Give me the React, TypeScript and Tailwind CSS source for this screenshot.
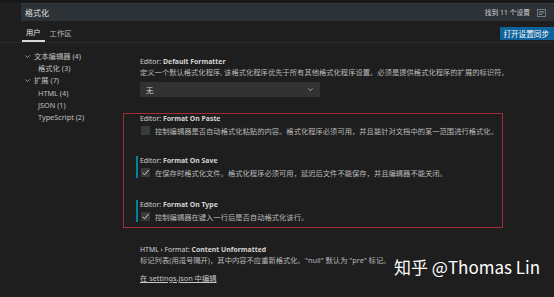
import React from "react";

function Chevron() {
  return (
    <svg width="7" height="7" viewBox="0 0 16 16" className="shrink-0">
      <path d="M3 5.5 L8 10.5 L13 5.5" fill="none" stroke="#c5c5c5" strokeWidth="1.6" />
    </svg>
  );
}

function Check() {
  return (
    <svg width="9" height="9" viewBox="0 0 16 16">
      <path d="M3 8.5 L6.5 12 L13.5 3.5" fill="none" stroke="#e0e0e0" strokeWidth="1.6" />
    </svg>
  );
}

function TreeItem({ label, level, chevron }: { label: string; level: number; chevron?: boolean }) {
  return (
    <div className={`flex items-center h-[12.2px] ${level === 0 ? "pl-[24px] gap-[3px]" : "pl-[38px]"}`}>
      {chevron && <Chevron />}
      <span>{label}</span>
    </div>
  );
}

function BoolSetting({
  name,
  desc,
  checked,
  modified,
  className,
}: {
  name: string;
  desc: string;
  checked: boolean;
  modified: boolean;
  className?: string;
}) {
  return (
    <div
      className={`ml-[12px] pl-[2px] border-l-2 ${modified ? "border-[#0c7d9d]" : "border-transparent"} ${className ?? ""}`}
    >
      <div className="leading-[10px] text-[6.9px] text-[#d4d4d4]">
        Editor: <span className="font-bold">{name}</span>
      </div>
      <div className="mt-[1px] h-[11px] flex items-center gap-[5px]">
        <div className="w-[9px] h-[9px] ml-[1px] bg-[#3a3a3a] flex items-center justify-center shrink-0">
          {checked && <Check />}
        </div>
        <span className="text-[#b9b9b9] whitespace-nowrap">{desc}</span>
      </div>
    </div>
  );
}

export default function App() {
  return (
    <div className="w-[554px] h-[297px] bg-[#1e1e1e] overflow-hidden relative text-[#cccccc] text-[7.3px] leading-[10px] font-['Noto_Sans','Noto_Sans_CJK_SC',sans-serif]">
      <div className="h-[3px] bg-[#181818]" />
      <div className="flex pl-[21px]">
        <div className="flex-1 h-[18px] bg-[#2d3237] border-t border-[#353b41] flex items-center pl-[4px] pr-[8px]">
          <span className="text-[8px] text-[#e0e0e0]">格式化</span>
          <div className="ml-auto flex items-center gap-[7px]">
            <span className="text-[6.8px] text-[#d0d0d0]">找到 11 个设置</span>
            <svg width="9" height="8" viewBox="0 0 9 8">
              <rect x="0.5" y="0.5" width="8" height="7" fill="none" stroke="#8a8a8a" strokeWidth="0.8" />
              <path d="M2 2.5 H7 M2 4 H7 M2 5.5 H5" stroke="#8a8a8a" strokeWidth="0.8" />
            </svg>
          </div>
        </div>
      </div>
      <div className="h-[22px] flex border-b border-[#2a2a2a]">
        <div className="flex pl-[22px] gap-[4px]">
          <div className="px-[4px] pt-[3px] flex items-center border-b-2 border-[#d8d8d8] text-[#e8e8e8]">用户</div>
          <div className="px-[1px] pt-[3px] flex items-center text-[#b8b8b8]">工作区</div>
        </div>
        <div className="ml-auto mt-[6px] h-[13px] bg-[#0e639c] text-white text-[7.6px] flex items-center pl-[3px] pr-[5px] whitespace-nowrap">
          打开设置同步
        </div>
      </div>
      <div className="flex">
        <div className="w-[123px] shrink-0 pt-[7px] text-[#c0c0c0] leading-[12px]">
          <TreeItem label="文本编辑器 (4)" level={0} chevron />
          <TreeItem label="格式化 (3)" level={1} />
          <TreeItem label="扩展 (7)" level={0} chevron />
          <TreeItem label="HTML (4)" level={1} />
          <TreeItem label="JSON (1)" level={1} />
          <TreeItem label="TypeScript (2)" level={1} />
        </div>
        <div className="flex-1 pt-[14px]">
          <div className="pl-[17px]">
            <div className="text-[6.9px] text-[#d4d4d4]">
              Editor: <span className="font-bold">Default Formatter</span>
            </div>
            <div className="text-[#b9b9b9] whitespace-nowrap">
              定义一个默认格式化程序, 该格式化程序优先于所有其他格式化程序设置。必须是提供格式化程序的扩展的标识符。
            </div>
            <div className="mt-[5px] w-[180px] h-[15px] bg-[#323232] flex items-center pl-[6px] pr-[6px]">
              <span className="text-[#d8d8d8]">无</span>
              <svg width="7" height="7" viewBox="0 0 16 16" className="ml-auto">
                <path d="M3 5.5 L8 10.5 L13 5.5" fill="none" stroke="#c5c5c5" strokeWidth="1.8" />
              </svg>
            </div>
          </div>
          <div className="mt-[16px] w-[380px] border border-[#a22c38] pb-[5px]">
            <BoolSetting
              name="Format On Paste"
              desc="控制编辑器是否自动格式化粘贴的内容。格式化程序必须可用，并且能针对文档中的某一范围进行格式化。"
              checked={false}
              modified={false}
            />
            <BoolSetting
              className="mt-[20px]"
              name="Format On Save"
              desc="在保存时格式化文件。格式化程序必须可用，延迟后文件不能保存，并且编辑器不能关闭。"
              checked
              modified
            />
            <BoolSetting
              className="mt-[22px]"
              name="Format On Type"
              desc="控制编辑器在键入一行后是否自动格式化该行。"
              checked
              modified
            />
          </div>
          <div className="pl-[17px] mt-[17px]">
            <div className="text-[6.9px] text-[#d4d4d4]">
              HTML › Format: <span className="font-bold">Content Unformatted</span>
            </div>
            <div className="text-[#b9b9b9] whitespace-nowrap">
              标记列表(用逗号隔开)，其中内容不应重新格式化。"null" 默认为 "pre" 标记。
            </div>
            <div className="mt-[8px] underline text-[#c8c8c8]">在 settings.json 中编辑</div>
          </div>
        </div>
      </div>
      <div className="absolute left-[394px] top-[255px] text-[17px] leading-[24px] text-white font-['Noto_Sans_CJK_SC','Noto_Sans',sans-serif]">
        知乎 @Thomas Lin
      </div>
    </div>
  );
}
